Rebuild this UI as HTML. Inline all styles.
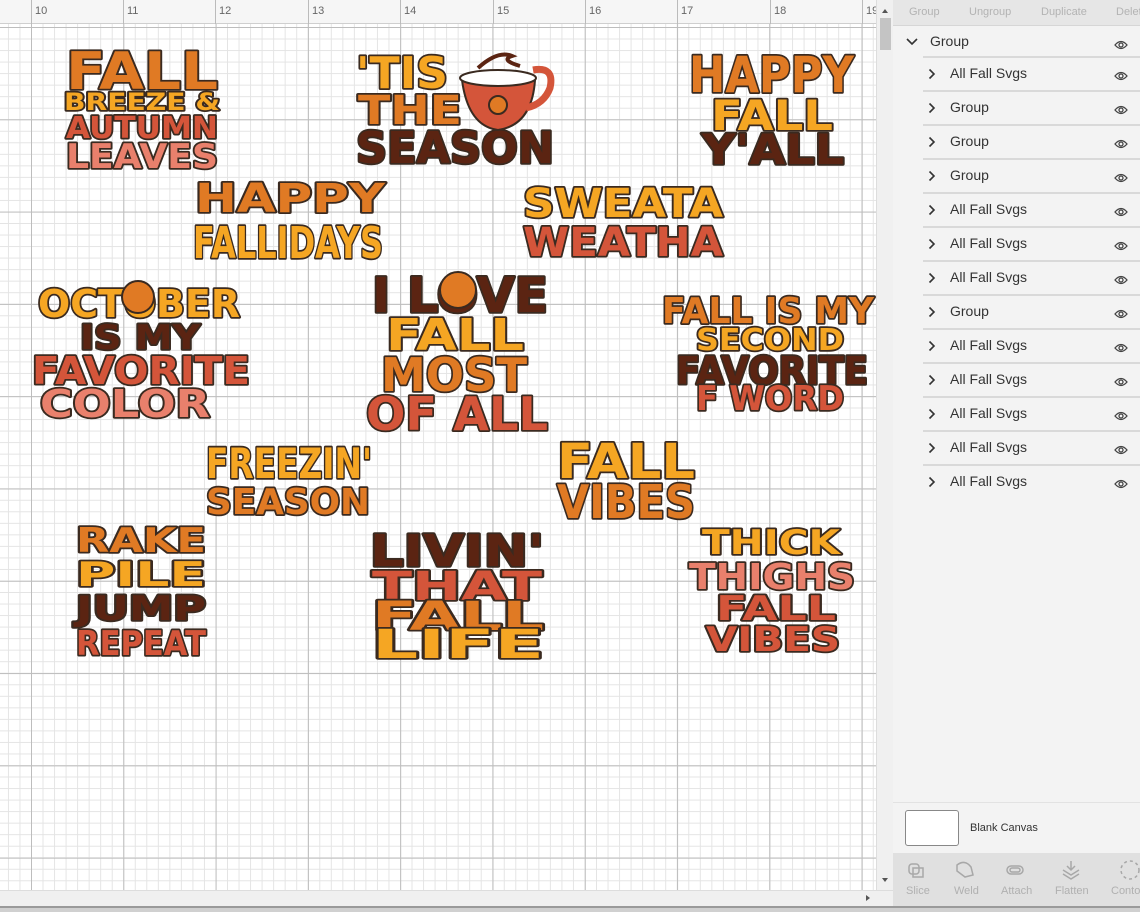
<!DOCTYPE html>
<html><head><meta charset="utf-8"><style>
*{margin:0;padding:0;box-sizing:border-box}
body{width:1140px;height:912px;overflow:hidden;background:#fff;font-family:"Liberation Sans",sans-serif;position:relative}
#ruler{position:absolute;left:0;top:0;width:876px;height:24px;background:#f6f6f6;border-bottom:1px solid #cfcfcf}
#grid{position:absolute;left:0;top:24px;width:876px;height:866px;background-color:#fff;
background-image:
linear-gradient(to right,#bdbdbd 1px,transparent 1px),
linear-gradient(to bottom,#bdbdbd 1px,transparent 1px),
linear-gradient(to right,#e4e4e4 1px,transparent 1px),
linear-gradient(to bottom,#e4e4e4 1px,transparent 1px);
background-size:92.3px 92.3px,92.3px 92.3px,11.54px 11.54px,11.54px 11.54px;
background-position:31px 3px,31px 3px,31px 3px,31px 3px}
#vs{position:absolute;left:876px;top:0;width:17px;height:890px;background:#f0f0f0;border-left:1px solid #ddd}
#hs{position:absolute;left:0;top:890px;width:893px;height:17px;background:#f0f0f0;border-top:1px solid #ddd}
#bot{position:absolute;left:0;top:906px;width:1140px;height:6px;background:#d0d0d0;border-top:2px solid #9a9a9a}
#panel{position:absolute;left:893px;top:0;width:247px;height:906px;background:#f3f3f3}
#hdr{position:absolute;left:0;top:0;width:247px;height:26px;background:#e6e6e6;border-bottom:1px solid #d6d6d6;font-size:11px;color:#b3b3b3}
#hdr span{position:absolute;top:6px}
.row{position:absolute;left:0;width:247px;height:34px;font-size:14px;color:#333}
.row .t{position:absolute;top:0}
.sep{position:absolute;left:30px;width:217px;height:2px;background:#d9d9d9}
.eye{position:absolute;left:221px;top:-1px}
#tools{position:absolute;left:0;top:853px;width:247px;height:53px;background:#e0e0e0;font-size:11px;color:#b0b0b0}
#tools span{position:absolute;top:32px}
</style></head><body>
<div id="ruler">
<svg width="876" height="24" style="position:absolute;left:0;top:0">
<g font-family="Liberation Sans" font-size="11" fill="#666">
<text x="35" y="14">10</text><text x="127" y="14">11</text><text x="219" y="14">12</text><text x="312" y="14">13</text><text x="404" y="14">14</text><text x="497" y="14">15</text><text x="589" y="14">16</text><text x="681" y="14">17</text><text x="774" y="14">18</text><text x="866" y="14">19</text>
</g>
<g stroke="#bbb" stroke-width="1">
<path d="M31.5 0V24M123.5 0V24M215.5 0V24M308.5 0V24M400.5 0V24M493.5 0V24M585.5 0V24M677.5 0V24M770.5 0V24M862.5 0V24"/>
</g>
</svg>
</div>
<div id="grid">
<svg width="876" height="866" style="position:absolute;left:0;top:-24px;overflow:visible" font-family="DejaVu Sans,Liberation Sans,sans-serif" font-weight="bold">
<g stroke="#3a2a20" stroke-width="3.5" paint-order="stroke" stroke-linejoin="round">
<text x="66" y="89" font-size="52" textLength="152" lengthAdjust="spacingAndGlyphs" fill="#e07a24">FALL</text>
<text x="64" y="110" font-size="24" textLength="156" lengthAdjust="spacingAndGlyphs" fill="#f5a623">BREEZE &amp;</text>
<text x="66" y="138" font-size="30" textLength="152" lengthAdjust="spacingAndGlyphs" fill="#d4553a">AUTUMN</text>
<text x="66" y="168" font-size="34" textLength="152" lengthAdjust="spacingAndGlyphs" fill="#e9806c">LEAVES</text>
<text x="356" y="88" font-size="44" textLength="92" lengthAdjust="spacingAndGlyphs" fill="#f5a623">'TIS</text>
<text x="358" y="124" font-size="40" textLength="104" lengthAdjust="spacingAndGlyphs" fill="#e07a24">THE</text>
<text x="356" y="163" font-size="44" textLength="198" lengthAdjust="spacingAndGlyphs" fill="#5b2412">SEASON</text>
<text x="689" y="92" font-size="50" textLength="165" lengthAdjust="spacingAndGlyphs" fill="#e07a24">HAPPY</text>
<text x="711" y="130" font-size="42" textLength="122" lengthAdjust="spacingAndGlyphs" fill="#f5a623">FALL</text>
<text x="702" y="164" font-size="42" textLength="142" lengthAdjust="spacingAndGlyphs" fill="#5b2412">Y'ALL</text>
<text x="195" y="212" font-size="40" textLength="190" lengthAdjust="spacingAndGlyphs" fill="#e07a24">HAPPY</text>
<text x="193" y="258" font-size="44" textLength="190" lengthAdjust="spacingAndGlyphs" fill="#f5a623">FALLIDAYS</text>
<text x="523" y="217" font-size="40" textLength="200" lengthAdjust="spacingAndGlyphs" fill="#f5a623">SWEATA</text>
<text x="523" y="256" font-size="40" textLength="200" lengthAdjust="spacingAndGlyphs" fill="#d4553a">WEATHA</text>
<text x="38" y="317" font-size="38" textLength="202" lengthAdjust="spacingAndGlyphs" fill="#f5a623">OCTOBER</text>
<text x="80" y="349" font-size="34" textLength="120" lengthAdjust="spacingAndGlyphs" fill="#5b2412">IS MY</text>
<text x="32" y="384" font-size="38" textLength="218" lengthAdjust="spacingAndGlyphs" fill="#d4553a">FAVORITE</text>
<text x="40" y="417" font-size="38" textLength="170" lengthAdjust="spacingAndGlyphs" fill="#e9806c">COLOR</text>
<text x="372" y="312" font-size="48" textLength="176" lengthAdjust="spacingAndGlyphs" fill="#5b2412">I LOVE</text>
<text x="386" y="350" font-size="44" textLength="138" lengthAdjust="spacingAndGlyphs" fill="#f5a623">FALL</text>
<text x="381" y="391" font-size="46" textLength="146" lengthAdjust="spacingAndGlyphs" fill="#e07a24">MOST</text>
<text x="366" y="430" font-size="46" textLength="182" lengthAdjust="spacingAndGlyphs" fill="#d4553a">OF ALL</text>
<text x="662" y="323" font-size="36" textLength="212" lengthAdjust="spacingAndGlyphs" fill="#e07a24">FALL IS MY</text>
<text x="696" y="350" font-size="30" textLength="148" lengthAdjust="spacingAndGlyphs" fill="#f5a623">SECOND</text>
<text x="676" y="384" font-size="38" textLength="192" lengthAdjust="spacingAndGlyphs" fill="#5b2412">FAVORITE</text>
<text x="696" y="410" font-size="34" textLength="148" lengthAdjust="spacingAndGlyphs" fill="#d4553a">F WORD</text>
<text x="206" y="478" font-size="42" textLength="166" lengthAdjust="spacingAndGlyphs" fill="#f5a623">FREEZIN'</text>
<text x="206" y="514" font-size="36" textLength="164" lengthAdjust="spacingAndGlyphs" fill="#e07a24">SEASON</text>
<text x="557" y="478" font-size="48" textLength="138" lengthAdjust="spacingAndGlyphs" fill="#f5a623">FALL</text>
<text x="557" y="518" font-size="46" textLength="138" lengthAdjust="spacingAndGlyphs" fill="#e07a24">VIBES</text>
<text x="76" y="552" font-size="34" textLength="130" lengthAdjust="spacingAndGlyphs" fill="#e07a24">RAKE</text>
<text x="76" y="586" font-size="34" textLength="130" lengthAdjust="spacingAndGlyphs" fill="#f5a623">PILE</text>
<text x="76" y="620" font-size="34" textLength="130" lengthAdjust="spacingAndGlyphs" fill="#5b2412">JUMP</text>
<text x="76" y="655" font-size="34" textLength="130" lengthAdjust="spacingAndGlyphs" fill="#d4553a">REPEAT</text>
<text x="370" y="566" font-size="44" textLength="174" lengthAdjust="spacingAndGlyphs" fill="#5b2412">LIVIN'</text>
<text x="372" y="600" font-size="40" textLength="170" lengthAdjust="spacingAndGlyphs" fill="#d4553a">THAT</text>
<text x="372" y="630" font-size="40" textLength="172" lengthAdjust="spacingAndGlyphs" fill="#e07a24">FALL</text>
<text x="372" y="658" font-size="40" textLength="172" lengthAdjust="spacingAndGlyphs" fill="#f5a623">LIFE</text>
<text x="702" y="554" font-size="34" textLength="138" lengthAdjust="spacingAndGlyphs" fill="#f5a623">THICK</text>
<text x="689" y="589" font-size="36" textLength="166" lengthAdjust="spacingAndGlyphs" fill="#e9806c">THIGHS</text>
<text x="716" y="620" font-size="34" textLength="120" lengthAdjust="spacingAndGlyphs" fill="#d4553a">FALL</text>
<text x="706" y="651" font-size="34" textLength="134" lengthAdjust="spacingAndGlyphs" fill="#d4553a">VIBES</text>
</g>
<g stroke="#3a2a20" stroke-width="2">
<path d="M462 80 H535 Q532 125 498 130 Q468 126 462 80Z" fill="#d4553a"/>
<path d="M533 70 Q555 66 550 88 Q544 104 526 108" fill="none" stroke="#d4553a" stroke-width="7"/>
<ellipse cx="498" cy="78" rx="38" ry="8" fill="#fff"/>
<path d="M478 68 Q498 50 512 56 Q500 60 520 66" fill="none" stroke="#5b2412" stroke-width="4"/>
<circle cx="498" cy="105" r="9" fill="#e07a24"/>
</g>
<circle cx="458" cy="290" r="18" fill="#e07a24" stroke="#3a2a20" stroke-width="2"/>
<circle cx="138" cy="297" r="16" fill="#e07a24" stroke="#3a2a20" stroke-width="2"/>
</svg>
</div>
<div id="vs"><div style="position:absolute;left:3px;top:18px;width:11px;height:32px;background:#c4c4c4"></div>
<div style="position:absolute;left:5px;top:6px;border:3px solid transparent;border-bottom:4px solid #555"></div>
<div style="position:absolute;left:5px;top:878px;border:3px solid transparent;border-top:4px solid #555"></div></div>
<div id="hs"><div style="position:absolute;left:866px;top:4px;border:3px solid transparent;border-left:4px solid #555"></div></div>
<div id="panel">
<div id="hdr"><span style="left:16px">Group</span><span style="left:76px">Ungroup</span><span style="left:148px">Duplicate</span><span style="left:223px">Delete</span></div>
<div class="row" style="top:33px"><svg style="position:absolute;left:13px;top:5px" width="12" height="8"><path d="M1 1L6 6L11 1" fill="none" stroke="#333" stroke-width="1.6"/></svg><span class="t" style="left:37px">Group</span></div>
<div id="rows"></div>
<div style="position:absolute;left:0;top:802px;width:247px;height:1px;background:#e2e2e2"></div>
<div style="position:absolute;left:12px;top:810px;width:54px;height:36px;background:#fff;border:1px solid #888;border-radius:3px"></div>
<div style="position:absolute;left:77px;top:822px;font-size:11px;color:#333">Blank Canvas</div>
<div id="tools">
<svg width="247" height="30" style="position:absolute;left:0;top:6px" fill="none" stroke="#a8a8a8" stroke-width="1.5">
<rect x="16" y="5" width="10" height="10" rx="3"/><rect x="20" y="9" width="10" height="9"/>
<path d="M64 6 Q72 0 78 8 L80 16 L72 18 L64 12Z"/>
<rect x="114" y="7" width="16" height="8" rx="4"/><rect x="117" y="9" width="10" height="4" rx="2"/>
<path d="M178 2V10M174 7L178 11L182 7M170 11L178 16L186 11M170 15L178 20L186 15"/>
<circle cx="237" cy="11" r="9" stroke-dasharray="3 3"/>
</svg>
<span style="left:13px">Slice</span><span style="left:61px">Weld</span><span style="left:108px">Attach</span><span style="left:162px">Flatten</span><span style="left:218px">Contour</span></div>
</div>
<div id="bot"></div>
<script>
var names=["All Fall Svgs","Group","Group","Group","All Fall Svgs","All Fall Svgs","All Fall Svgs","Group","All Fall Svgs","All Fall Svgs","All Fall Svgs","All Fall Svgs","All Fall Svgs"];
var h="";
var eye='<svg width="14" height="10" viewBox="0 0 14 10"><path d="M1 5Q7 -2 13 5Q7 12 1 5Z" fill="none" stroke="#444" stroke-width="1.3"/><circle cx="7" cy="5" r="2" fill="none" stroke="#444" stroke-width="1.3"/></svg>';
h+='<div class="row" style="top:38px"><span class="eye">'+eye+'</span></div>';
for(var i=0;i<names.length;i++){var y=65+34*i;
h+='<div class="sep" style="top:'+(y-9)+'px"></div><div class="row" style="top:'+y+'px"><svg style="position:absolute;left:35px;top:3px" width="8" height="12"><path d="M1.5 1.5L6 6L1.5 10.5" fill="none" stroke="#333" stroke-width="1.6"/></svg><span class="t" style="left:57px">'+names[i]+'</span><span class="eye" style="top:3px">'+eye+'</span></div>';}
document.getElementById("rows").innerHTML=h;
</script>
</body></html>
